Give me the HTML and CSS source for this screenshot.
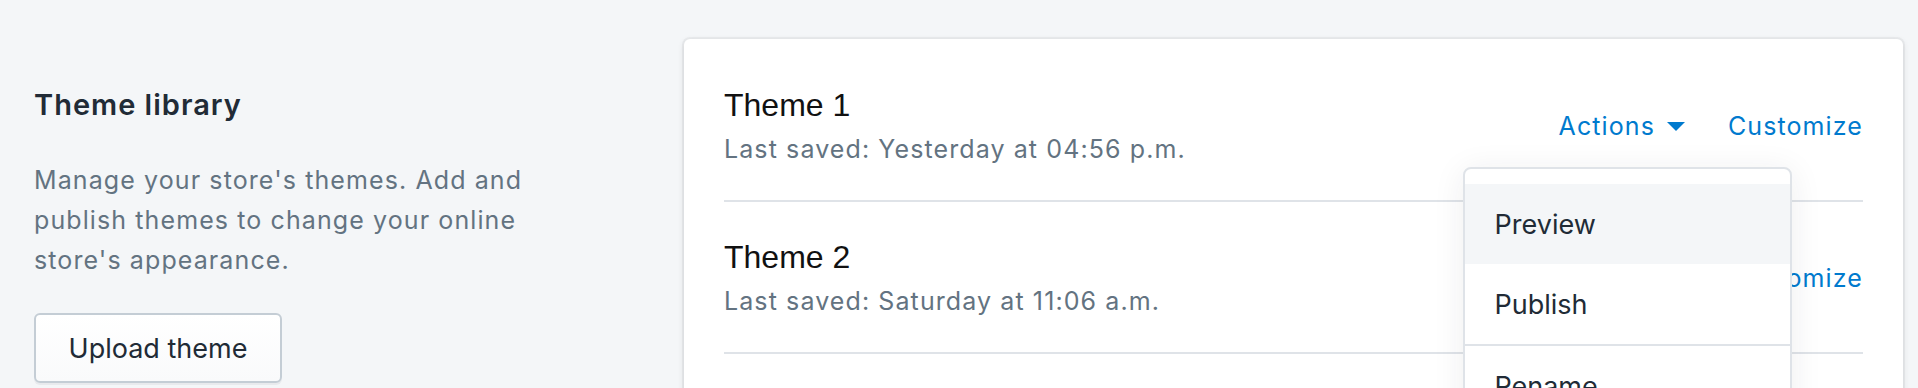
FILE: index.html
```html
<!DOCTYPE html>
<html lang="en">
  <head>
    <meta charset="UTF-8" />
    <meta name="viewport" content="width=device-width, initial-scale=1.0" />
    <title>Themes</title>
    <link rel="stylesheet" href="styles.css">
  </head>
  <body>
    <div class="layout">
      <div class="aside">
        <h2 class="aside-title">Theme library</h2>
        <p class="aside-text">
          Manage your store's themes. Add and publish themes to change your
          online store's appearance.
        </p>
        <button class="btn">Upload theme</button>
      </div>

      <div class="card">
        <div class="theme-row first">
          <div class="theme-info">
            <div class="theme-name">Theme 1</div>
            <div class="theme-saved">Last saved: Yesterday at 04:56 p.m.</div>
          </div>
          <div class="theme-actions">
            <div class="actions-wrap">
              <a class="link actions-link" href="#">
                Actions
                <svg class="caret" width="18" height="9" viewBox="0 0 18 9">
                  <polygon points="0,0 18,0 9,9" fill="#007ace" />
                </svg>
              </a>
              <div class="popover">
                <div class="popover-section">
                  <div class="popover-item active">Preview</div>
                  <div class="popover-item">Publish</div>
                </div>
                <div class="popover-section">
                  <div class="popover-item">Rename</div>
                  <div class="popover-item">Duplicate</div>
                </div>
              </div>
            </div>
            <a class="link" href="#">Customize</a>
          </div>
        </div>
        <div class="theme-row">
          <div class="theme-info">
            <div class="theme-name">Theme 2</div>
            <div class="theme-saved">Last saved: Saturday at 11:06 a.m.</div>
          </div>
          <div class="theme-actions">
            <a class="link actions-link" href="#">
              Actions
              <svg class="caret" width="18" height="9" viewBox="0 0 18 9">
                <polygon points="0,0 18,0 9,9" fill="#007ace" />
              </svg>
            </a>
            <a class="link" href="#">Customize</a>
          </div>
        </div>
        <div class="theme-row">
          <div class="theme-info">
            <div class="theme-name">Theme 3</div>
            <div class="theme-saved">Last saved: Friday at 09:12 a.m.</div>
          </div>
        </div>
      </div>
    </div>
  </body>
</html>
```

FILE: styles.css
```css
* {
  box-sizing: border-box;
  margin: 0;
  padding: 0;
}
html,
body {
  height: 100%;
  overflow: hidden;
}
body {
  background-color: #f4f6f8;
  font-family: Inter, "Liberation Sans", Arial, sans-serif;
  color: #212b36;
}
.layout {
  display: flex;
  gap: 120px;
  padding: 39px 15px 0 34px;
}
.aside {
  width: 530px;
  flex-shrink: 0;
  padding-top: 46px;
}
.aside-title {
  font-size: 29px;
  font-weight: 600;
  line-height: 40px;
  letter-spacing: 1px;
  color: #212b36;
}
.aside-text {
  margin-top: 35px;
  font-size: 25px;
  line-height: 40px;
  letter-spacing: 1.1px;
  color: #637381;
}
.btn {
  margin-top: 33px;
  width: 248px;
  height: 70px;
  border: 2px solid #c4cdd5;
  border-radius: 6px;
  background: linear-gradient(#ffffff, #f9fafb);
  box-shadow: 0 2px 0 rgba(22, 29, 37, 0.05);
  font-family: Inter, "Liberation Sans", Arial, sans-serif;
  font-size: 27px;
  color: #212b36;
  cursor: pointer;
}
.card {
  flex: 1;
  background: #ffffff;
  border-radius: 6px;
  box-shadow: 0 0 0 2px rgba(63, 63, 68, 0.05), 0 2px 6px rgba(63, 63, 68, 0.15);
  padding: 0 40px;
  min-height: 600px;
}
.theme-row {
  display: flex;
  align-items: center;
  justify-content: space-between;
  padding: 33px 0 31px;
  border-bottom: 2px solid #dfe3e8;
}
.theme-row.first {
  padding-top: 44px;
}
.theme-name {
  font-family: "Liberation Sans", Arial, sans-serif;
  font-size: 32px;
  line-height: 44px;
  color: #111111;
}
.theme-saved {
  margin-top: 2px;
  font-size: 25px;
  line-height: 40px;
  letter-spacing: 1.1px;
  color: #637381;
}
.theme-actions {
  display: flex;
  align-items: center;
  gap: 43px;
}
.actions-wrap {
  position: relative;
}
.link {
  display: flex;
  align-items: center;
  gap: 12px;
  font-size: 25px;
  line-height: 40px;
  letter-spacing: 1.1px;
  color: #007ace;
  text-decoration: none;
}
.popover {
  position: absolute;
  top: calc(100% + 21px);
  left: -96px;
  width: 329px;
  background: #ffffff;
  border: 2px solid #dfe3e8;
  border-radius: 8px;
  box-shadow: 0 4px 32px rgba(33, 43, 54, 0.08);
  padding-top: 15px;
  z-index: 10;
}
.popover-section + .popover-section {
  border-top: 2px solid #dfe3e8;
}
.popover-item {
  height: 80px;
  display: flex;
  align-items: center;
  padding-left: 30px;
  font-size: 27px;
  color: #212b36;
}
.popover-item.active {
  background: #f4f6f8;
}
```
